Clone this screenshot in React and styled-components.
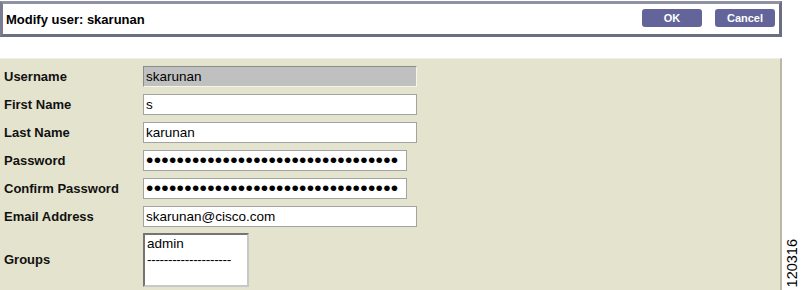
import React from "react";
import styled, { createGlobalStyle } from "styled-components";

const GlobalStyle = createGlobalStyle`
  html, body {
    margin: 0;
    padding: 0;
    background: #ffffff;
  }
  body {
    font-family: "Liberation Sans", Arial, sans-serif;
    color: #000;
  }
`;

const fields = [
  { label: "Username", value: "skarunan", kind: "locked" },
  { label: "First Name", value: "s" },
  { label: "Last Name", value: "karunan" },
  { label: "Password", value: "x".repeat(33), kind: "password" },
  { label: "Confirm Password", value: "x".repeat(33), kind: "password" },
  { label: "Email Address", value: "skarunan@cisco.com" },
];

const App = () => {
  return (
    <>
      <GlobalStyle />
      <Page>
        <Header>
          <Title>Modify user: skarunan</Title>
          <Actions>
            <ActionButton type="button">OK</ActionButton>
            <ActionButton type="button">Cancel</ActionButton>
          </Actions>
        </Header>

        <Panel>
          {fields.map((f) => (
            <Row key={f.label}>
              <Label>{f.label}</Label>
              <Field
                type={f.kind === "password" ? "password" : "text"}
                $kind={f.kind}
                value={f.value}
                readOnly
              />
            </Row>
          ))}
          <Row $tall>
            <Label>Groups</Label>
            <ListBox>
              <Option>admin</Option>
              <Option $dash>--------------------</Option>
            </ListBox>
          </Row>
        </Panel>

        <FigureNo>120316</FigureNo>
      </Page>
    </>
  );
};

export default App;

const Page = styled.div`
  position: relative;
  width: 801px;
  height: 290px;
  overflow: hidden;
  padding-top: 1px;
  box-sizing: border-box;
  display: flex;
  flex-direction: column;
`;

const Header = styled.div`
  width: 782px;
  height: 36px;
  box-sizing: border-box;
  display: flex;
  align-items: center;
  justify-content: space-between;
  padding: 0 4px 0 3px;
  background: #ffffff;
  border: 3px solid #6c6e82;
  border-top-color: #8f91a5;
  border-left-color: #7a7c90;
`;

const Title = styled.h1`
  margin: 0;
  font-size: 13px;
  font-weight: bold;
  color: #000;
`;

const Actions = styled.div`
  display: flex;
  gap: 13px;
  margin-top: -2px;
`;

const ActionButton = styled.button`
  width: 60px;
  height: 18px;
  padding: 0;
  border: none;
  border-radius: 3px;
  background: #62649a;
  color: #ffffff;
  font-family: "Liberation Sans", Arial, sans-serif;
  font-size: 11px;
  font-weight: bold;
  cursor: pointer;
`;

const Panel = styled.div`
  margin-top: 21px;
  width: 782px;
  flex: 1;
  box-sizing: border-box;
  padding-top: 3px;
  background: #e4e3cd;
  border-top: 1px solid #efeee0;
  border-right: 2px solid #b9b8a6;
`;

const Row = styled.div`
  display: grid;
  grid-template-columns: 143px 1fr;
  align-items: center;
  height: ${(p) => (p.$tall ? "58px" : "28px")};
`;

const Label = styled.div`
  padding-left: 4px;
  font-size: 13px;
  font-weight: bold;
  color: #111;
`;

const Field = styled.input`
  box-sizing: border-box;
  width: ${(p) => (p.$kind === "password" ? "264px" : "274px")};
  height: 21px;
  margin: 0;
  padding: 0 2px;
  font-family: "Liberation Sans", Arial, sans-serif;
  font-size: ${(p) => (p.$kind === "password" ? "21px" : "13.5px")};
  letter-spacing: ${(p) => (p.$kind === "password" ? "0.3px" : "0")};
  color: #000;
  outline: none;
  border: 1px solid #a3a3a3;
  background: ${(p) => (p.$kind === "locked" ? "#c0c0c0" : "#ffffff")};
  ${(p) =>
    p.$kind === "locked" &&
    `
    border-top-color: #8c8c8c;
    border-left-color: #8c8c8c;
    border-right-color: #f5f5ee;
    border-bottom-color: #f5f5ee;
  `}
`;

const ListBox = styled.div`
  box-sizing: border-box;
  width: 106px;
  height: 54px;
  margin-top: 2px;
  padding: 1px 2px;
  background: #ffffff;
  border: 2px inset #c8c8c8;
  font-size: 13.5px;
  line-height: 16px;
  overflow: hidden;
`;

const Option = styled.div`
  white-space: nowrap;
  letter-spacing: ${(p) => (p.$dash ? "-0.3px" : "0")};
`;

const FigureNo = styled.div`
  position: absolute;
  right: 1px;
  bottom: 3px;
  writing-mode: vertical-rl;
  transform: rotate(180deg);
  font-size: 14.5px;
  color: #000;
`;
